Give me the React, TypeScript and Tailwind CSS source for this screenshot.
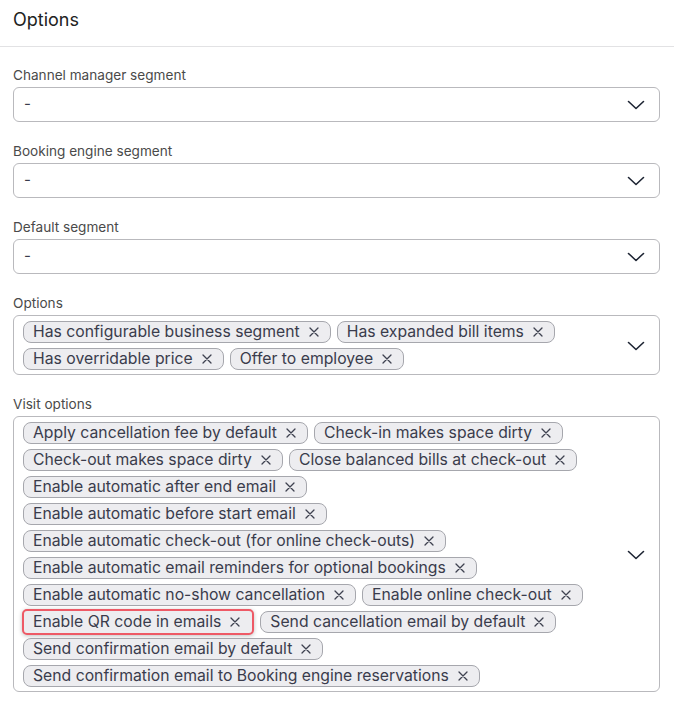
import React from "react";

const Chevron = () => (
  <svg width="18" height="10" viewBox="0 0 18 10" fill="none" className="shrink-0">
    <path d="M1.5 1.5 L9 8.5 L16.5 1.5" stroke="#1d2433" strokeWidth="1.6" strokeLinecap="round" strokeLinejoin="round" />
  </svg>
);

const XIcon = () => (
  <svg width="10" height="10" viewBox="0 0 10 10" fill="none" className="shrink-0">
    <path d="M1 1 L9 9 M9 1 L1 9" stroke="#3f4250" strokeWidth="1.3" strokeLinecap="round" />
  </svg>
);

const Chip = ({ text, highlight }: { text: string; highlight?: boolean }) => (
  <span
    className={
      highlight
        ? "flex h-[26px] -my-[2px] -ml-[1px] items-center gap-[9px] rounded-[5px] border-2 border-[#ee5a66] bg-[#ededf0] pl-[9px] pr-[12px] text-[15.75px] leading-[20px] text-[#3a3c4c] shadow-[0_1px_4px_rgba(0,0,0,0.25)]"
        : "flex h-[22px] items-center gap-[9px] rounded-[8px] border border-[#a6a7ad] bg-[#ededf0] pl-[9px] pr-[11px] text-[15.75px] leading-[20px] text-[#3a3c4c]"
    }
  >
    {text}
    <XIcon />
  </span>
);

const Label = ({ children }: { children: React.ReactNode }) => (
  <div className="h-[16px] text-[13.6px] leading-[16px] text-[#4a4a4a]">{children}</div>
);

const Select = ({ label }: { label: string }) => (
  <div className="flex flex-col gap-[4px]">
    <Label>{label}</Label>
    <div className="flex h-[35px] items-center justify-between rounded-[6px] border border-[#b9b9bd] pl-[10px] pr-[14px]">
      <span className="text-[15px] text-[#3a3c4c]">-</span>
      <Chevron />
    </div>
  </div>
);

const Multi = ({ label, chips, hl }: { label: string; chips: string[]; hl?: string }) => (
  <div className="flex flex-col gap-[4px]">
    <Label>{label}</Label>
    <div className="flex items-center justify-between gap-[40px] rounded-[6px] border border-[#b9b9bd] pt-[5px] pb-[4px] pl-[9px] pr-[14px]">
      <div className="flex flex-1 flex-wrap gap-x-[6px] gap-y-[5px]">
        {chips.map((c) => (
          <Chip key={c} text={c} highlight={c === hl} />
        ))}
      </div>
      <Chevron />
    </div>
  </div>
);

export default function App() {
  return (
    <div className="w-[674px] bg-white font-['Inter',sans-serif]">
      <div className="h-[47px] border-b border-[#e2e2e4] pl-[13px] pt-[9px] text-[18px] leading-[22px] text-[#222]">
        Options
      </div>
      <div className="flex flex-col gap-[21px] pl-[13px] pr-[14px] pt-[20px] pb-[20px]">
        <Select label="Channel manager segment" />
        <Select label="Booking engine segment" />
        <Select label="Default segment" />
        <Multi
          label="Options"
          chips={[
            "Has configurable business segment",
            "Has expanded bill items",
            "Has overridable price",
            "Offer to employee",
          ]}
        />
        <Multi
          label="Visit options"
          hl="Enable QR code in emails"
          chips={[
            "Apply cancellation fee by default",
            "Check-in makes space dirty",
            "Check-out makes space dirty",
            "Close balanced bills at check-out",
            "Enable automatic after end email",
            "Enable automatic before start email",
            "Enable automatic check-out (for online check-outs)",
            "Enable automatic email reminders for optional bookings",
            "Enable automatic no-show cancellation",
            "Enable online check-out",
            "Enable QR code in emails",
            "Send cancellation email by default",
            "Send confirmation email by default",
            "Send confirmation email to Booking engine reservations",
          ]}
        />
      </div>
    </div>
  );
}
